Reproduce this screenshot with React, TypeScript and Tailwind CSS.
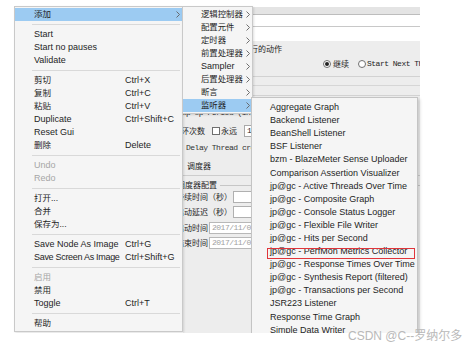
import React from 'react';

type Row = { label: string; shortcut?: string; disabled?: boolean; arrow?: boolean; active?: boolean } | 'sep';

const mainRows: Row[] = [
  { label: '添加', arrow: true, active: true },
  'sep',
  { label: 'Start' },
  { label: 'Start no pauses' },
  { label: 'Validate' },
  'sep',
  { label: '剪切', shortcut: 'Ctrl+X' },
  { label: '复制', shortcut: 'Ctrl+C' },
  { label: '粘贴', shortcut: 'Ctrl+V' },
  { label: 'Duplicate', shortcut: 'Ctrl+Shift+C' },
  { label: 'Reset Gui' },
  { label: '删除', shortcut: 'Delete' },
  'sep',
  { label: 'Undo', disabled: true },
  { label: 'Redo', disabled: true },
  'sep',
  { label: '打开...' },
  { label: '合并' },
  { label: '保存为...' },
  'sep',
  { label: 'Save Node As Image', shortcut: 'Ctrl+G' },
  { label: 'Save Screen As Image', shortcut: 'Ctrl+Shift+G' },
  'sep',
  { label: '启用', disabled: true },
  { label: '禁用' },
  { label: 'Toggle', shortcut: 'Ctrl+T' },
  'sep',
  { label: '帮助' },
];

const addRows = ['逻辑控制器', '配置元件', '定时器', '前置处理器', 'Sampler', '后置处理器', '断言', '监听器'];

const listeners = [
  'Aggregate Graph',
  'Backend Listener',
  'BeanShell Listener',
  'BSF Listener',
  'bzm - BlazeMeter Sense Uploader',
  'Comparison Assertion Visualizer',
  'jp@gc - Active Threads Over Time',
  'jp@gc - Composite Graph',
  'jp@gc - Console Status Logger',
  'jp@gc - Flexible File Writer',
  'jp@gc - Hits per Second',
  'jp@gc - PerfMon Metrics Collector',
  'jp@gc - Response Times Over Time',
  'jp@gc - Synthesis Report (filtered)',
  'jp@gc - Transactions per Second',
  'JSR223 Listener',
  'Response Time Graph',
  'Simple Data Writer',
  'Summary Report',
];

// chinese labels render a touch smaller than the latin ones in the screenshot
const isCjk = (s: string) => /[\u4e00-\u9fff]/.test(s);

const Chevron = () => (
  <svg width="4" height="7" viewBox="0 0 4 7" className="shrink-0">
    <path d="M0.5 0.5 L3.5 3.5 L0.5 6.5" fill="none" stroke="#606060" strokeWidth="0.9" />
  </svg>
);

const Sep = () => (
  <div className="h-[7px] flex items-center pl-[17px] pr-[2px]">
    <div className="h-px w-full bg-[#d9d9d9]" />
  </div>
);

export default function App() {
  return (
    <div className="relative w-[474px] h-[348px] bg-white overflow-hidden font-['Liberation_Sans','Noto_Sans_CJK_SC',sans-serif] text-[#1e1e1e]">
      <div className="relative h-[333px] overflow-hidden">
        {/* JMeter window behind the menus */}
        <div className="ml-[183px] mt-[7px] w-[237px] h-[326px] bg-[#ededed] flex flex-col overflow-hidden text-[8px] font-['Noto_Sans_CJK_SC',sans-serif] whitespace-nowrap">
          <div className="h-[8px] bg-[#e4e4e4] border-b border-[#bdbdbd] shrink-0" />
          <div className="h-[12px] bg-white border-b border-[#c8c8c8] shrink-0" />
          <div className="h-[14px] bg-white shrink-0" />
          <div className="h-[15px] flex items-center shrink-0">
            <span className="w-[99px] text-right leading-none shrink-0">取样器错误后要执行的动作</span>
          </div>
          <div className="h-[16px] flex items-center pl-[140px] shrink-0">
            <span className="w-[8px] h-[8px] rounded-full border border-[#707070] bg-white flex items-center justify-center shrink-0">
              <span className="w-[4px] h-[4px] rounded-full bg-[#222]" />
            </span>
            <span className="ml-[2px] w-[16px] leading-none shrink-0">继续</span>
            <span className="ml-[9px] w-[8px] h-[8px] rounded-full border border-[#707070] bg-white shrink-0" />
            <span className="ml-[1px] font-['Liberation_Mono',monospace] tracking-[-0.5px] leading-none shrink-0">Start Next Thread Loop</span>
          </div>
          <div className="h-[4px] shrink-0" />
          <div className="h-px bg-[#d2d2d2] shrink-0" />
          <div className="h-[8px] shrink-0" />
          <div className="h-px bg-[#d6d6d6] shrink-0" />
          <div className="h-[9px] shrink-0" />
          <div className="h-px bg-[#d2d2d2] shrink-0" />
          <div className="h-[11px] shrink-0" />
          <div className="h-[12px] flex items-center shrink-0">
            <span className="ml-[-10px] font-['Liberation_Mono',monospace] tracking-[-0.5px] text-[#333] shrink-0">Ramp-Up Period (in seconds):</span>
          </div>
          <div className="h-[5px] shrink-0" />
          <div className="h-[14px] flex items-center shrink-0">
            <span className="ml-[-10px] w-[39px] shrink-0">循环次数</span>
            <span className="w-[8px] h-[8px] border border-[#6f6f6f] bg-white shrink-0" />
            <span className="ml-[1px] w-[23px] shrink-0">永远</span>
            <span className="h-[12px] w-[20px] bg-white border border-[#a9a9a9] pl-[2px] flex items-center font-['Liberation_Mono',monospace] shrink-0">1</span>
          </div>
          <div className="h-[4px] shrink-0" />
          <div className="h-[12px] flex items-center shrink-0 pl-[3px]">
            <span className="font-['Liberation_Mono',monospace] tracking-[-0.5px] text-[#333] shrink-0">Delay Thread creation until needed</span>
          </div>
          <div className="h-[5px] shrink-0" />
          <div className="h-[14px] flex items-center shrink-0 pl-[4px]">
            <span>调度器</span>
          </div>
          <div className="h-[2px] shrink-0" />
          <div className="h-px bg-[#cdcdcd] shrink-0" />
          <div className="h-[3px] shrink-0" />
          <div className="h-[12px] flex items-center shrink-0">
            <span className="ml-[-6px] shrink-0">调度器配置</span>
            <span className="ml-[3px] h-px flex-1 bg-[#c6c6c6]" />
          </div>
          <div className="h-[12px] flex items-center shrink-0">
            <span className="ml-[-7px] w-[57px] shrink-0">持续时间（秒）</span>
            <span className="h-[12px] w-[30px] bg-white border border-[#b0b0b0] shrink-0" />
          </div>
          <div className="h-[3px] shrink-0" />
          <div className="h-[12px] flex items-center shrink-0">
            <span className="ml-[-7px] w-[57px] shrink-0">启动延迟（秒）</span>
            <span className="h-[12px] w-[30px] bg-white border border-[#b0b0b0] shrink-0" />
          </div>
          <div className="h-[4px] shrink-0" />
          <div className="h-[12px] flex items-center shrink-0">
            <span className="ml-[-7px] w-[33px] shrink-0">启动时间</span>
            <span className="h-[12px] w-[60px] bg-white border border-[#b8b8b8] pl-[2px] flex items-center font-['Liberation_Mono',monospace] tracking-[-0.5px] text-[#a0a0a0] shrink-0">2017/11/07 10:00:00</span>
          </div>
          <div className="h-[3px] shrink-0" />
          <div className="h-[12px] flex items-center shrink-0">
            <span className="ml-[-7px] w-[33px] shrink-0">结束时间</span>
            <span className="h-[12px] w-[60px] bg-white border border-[#b8b8b8] pl-[2px] flex items-center font-['Liberation_Mono',monospace] tracking-[-0.5px] text-[#a0a0a0] shrink-0">2017/11/07 10:00:00</span>
          </div>
        </div>

        {/* main context menu */}
        <div className="absolute left-[14px] top-[6px] w-[169px] bg-[#f5f5f5] border border-[#c9c9c9] py-px text-[9px] leading-[13px] shadow-[1px_1px_2px_rgba(0,0,0,0.12)]">
          {mainRows.map((r, i) =>
            r === 'sep' ? (
              <Sep key={i} />
            ) : (
              <div
                key={i}
                className={`h-[13px] flex items-center pl-[19px] pr-[2px] whitespace-nowrap ${r.active ? 'bg-[#9ccbf2]' : ''} ${r.disabled ? 'text-[#a6a6a6]' : ''}`}
              >
                <span
                  className={`w-[91px] shrink-0 ${isCjk(r.label) ? 'text-[8.5px]' : ''} ${r.label.length > 18 ? 'tracking-[-0.3px]' : ''}`}
                >
                  {r.label}
                </span>
                {r.shortcut && <span>{r.shortcut}</span>}
                {r.arrow && (
                  <span className="ml-auto">
                    <Chevron />
                  </span>
                )}
              </div>
            )
          )}
        </div>

        {/* 添加 submenu */}
        <div className="absolute left-[182px] top-[6px] w-[71px] bg-[#f5f5f5] border border-[#c9c9c9] py-px text-[9px] leading-[13px] shadow-[1px_1px_2px_rgba(0,0,0,0.12)]">
          {addRows.map((label, i) => (
            <div
              key={label}
              className={`h-[13px] flex items-center pl-[18px] pr-[2px] whitespace-nowrap ${i === addRows.length - 1 ? 'bg-[#9ccbf2]' : ''}`}
            >
              <span className={isCjk(label) ? 'text-[8.4px]' : ''}>{label}</span>
              <span className="ml-auto">
                <Chevron />
              </span>
            </div>
          ))}
        </div>

        {/* 监听器 submenu */}
        <div className="absolute left-[251px] top-[97px] w-[167px] bg-[#f5f5f5] border border-[#c4c4c4] pt-[3px] text-[9px] leading-[13px] shadow-[2px_2px_3px_rgba(0,0,0,0.15)]">
          {listeners.map((label) => (
            <div key={label} className="relative h-[13.1px] flex items-center pl-[18px] whitespace-nowrap">
              <span>{label}</span>
              {label === 'jp@gc - PerfMon Metrics Collector' && (
                <span className="absolute left-[15px] top-[2.5px] w-[148px] h-[11px] border-[1.5px] border-[#e0353b]" />
              )}
            </div>
          ))}
        </div>
      </div>

      <div className="absolute left-[348px] top-[329px] text-[12px] leading-[14px] text-[#b9b9b9] whitespace-nowrap">
        CSDN @C--罗纳尔多
      </div>
    </div>
  );
}
